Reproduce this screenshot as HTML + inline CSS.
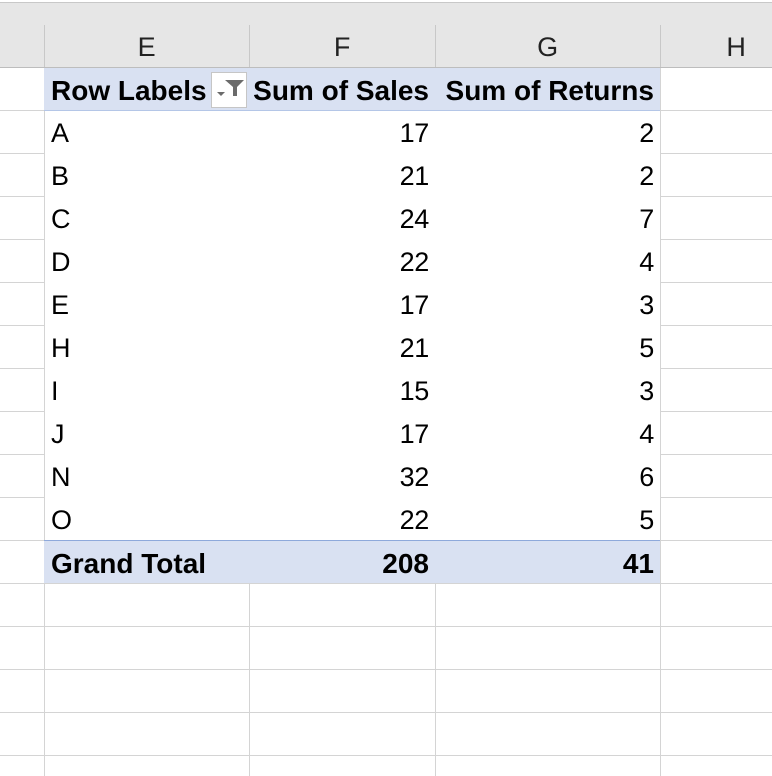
<!DOCTYPE html>
<html><head><style>
body{margin:0;width:772px;height:776px;overflow:hidden;background:#fff;font-family:"Liberation Sans",Arial,sans-serif;position:relative}
.a{position:absolute}
.hl{position:absolute;left:0;width:772px;height:1px;background:#d4d4d4}
.vl{position:absolute;top:68px;height:708px;width:1px;background:#d4d4d4}
.t{position:absolute;font-size:27px;line-height:43px;height:43px;color:#000;white-space:nowrap;letter-spacing:-0.3px}
.b{font-weight:bold;letter-spacing:0}
.r{text-align:right}
</style></head><body>
<div class="a" style="left:0;top:0;width:772px;height:2px;background:#fff"></div>
<div class="a" style="left:0;top:2px;width:772px;height:1px;background:#c8c8c8"></div>
<div class="a" style="left:0;top:3px;width:772px;height:64px;background:#e6e6e6"></div>
<div class="a" style="left:0;top:67px;width:772px;height:1px;background:#bdbdbd"></div>
<div class="a" style="left:44px;top:25px;width:1px;height:42px;background:#c8c8c8"></div>
<div class="a" style="left:249px;top:25px;width:1px;height:42px;background:#c8c8c8"></div>
<div class="a" style="left:435px;top:25px;width:1px;height:42px;background:#c8c8c8"></div>
<div class="a" style="left:660px;top:25px;width:1px;height:42px;background:#c8c8c8"></div>
<div class="t" style="left:44px;width:205px;top:26px;text-align:center;font-size:27px;color:#222">E</div>
<div class="t" style="left:249px;width:186px;top:26px;text-align:center;font-size:27px;color:#222">F</div>
<div class="t" style="left:435px;width:225px;top:26px;text-align:center;font-size:27px;color:#222">G</div>
<div class="t" style="left:660px;width:152px;top:26px;text-align:center;font-size:27px;color:#222">H</div>

<div class="hl" style="top:110px"></div><div class="hl" style="top:153px"></div><div class="hl" style="top:196px"></div><div class="hl" style="top:239px"></div><div class="hl" style="top:282px"></div><div class="hl" style="top:325px"></div><div class="hl" style="top:368px"></div><div class="hl" style="top:411px"></div><div class="hl" style="top:454px"></div><div class="hl" style="top:497px"></div><div class="hl" style="top:540px"></div><div class="hl" style="top:583px"></div><div class="hl" style="top:626px"></div><div class="hl" style="top:669px"></div><div class="hl" style="top:712px"></div><div class="hl" style="top:755px"></div>
<div class="vl" style="left:44px"></div><div class="vl" style="left:249px"></div><div class="vl" style="left:435px"></div><div class="vl" style="left:660px"></div>

<div class="a" style="left:45px;top:111px;width:615px;height:429px;background:#fff"></div>
<div class="a" style="left:44px;top:68px;width:616px;height:42px;background:#d9e1f2"></div>
<div class="a" style="left:44px;top:110px;width:616px;height:1px;background:#b4c6e7"></div>
<div class="a" style="left:44px;top:540px;width:616px;height:43px;background:#d9e1f2"></div>
<div class="a" style="left:44px;top:540px;width:616px;height:1px;background:#8ea9db"></div>
<div class="a" style="left:211px;top:72px;width:36px;height:36px;background:#fff;border:1px solid #c6c6c6;box-sizing:border-box"></div>
<svg class="a" style="left:211px;top:72px" width="37" height="37"><path d="M14 8 H33 L26 15 V24 H22 V15 Z" fill="#6b6b6b"/><path d="M6 20 H14 L10 24 Z" fill="#6b6b6b"/></svg>

<div class="t b" style="left:51px;top:69px;font-size:28px">Row Labels</div>
<div class="t r b" style="left:249px;width:180px;top:69px;font-size:28px">Sum of Sales</div>
<div class="t r b" style="left:435px;width:219px;top:69px;font-size:28px">Sum of Returns</div>

<div class="t" style="left:51px;top:112px">A</div><div class="t r" style="left:249px;width:180px;top:112px">17</div><div class="t r" style="left:435px;width:219px;top:112px">2</div>
<div class="t" style="left:51px;top:155px">B</div><div class="t r" style="left:249px;width:180px;top:155px">21</div><div class="t r" style="left:435px;width:219px;top:155px">2</div>
<div class="t" style="left:51px;top:198px">C</div><div class="t r" style="left:249px;width:180px;top:198px">24</div><div class="t r" style="left:435px;width:219px;top:198px">7</div>
<div class="t" style="left:51px;top:241px">D</div><div class="t r" style="left:249px;width:180px;top:241px">22</div><div class="t r" style="left:435px;width:219px;top:241px">4</div>
<div class="t" style="left:51px;top:284px">E</div><div class="t r" style="left:249px;width:180px;top:284px">17</div><div class="t r" style="left:435px;width:219px;top:284px">3</div>
<div class="t" style="left:51px;top:327px">H</div><div class="t r" style="left:249px;width:180px;top:327px">21</div><div class="t r" style="left:435px;width:219px;top:327px">5</div>
<div class="t" style="left:51px;top:370px">I</div><div class="t r" style="left:249px;width:180px;top:370px">15</div><div class="t r" style="left:435px;width:219px;top:370px">3</div>
<div class="t" style="left:51px;top:413px">J</div><div class="t r" style="left:249px;width:180px;top:413px">17</div><div class="t r" style="left:435px;width:219px;top:413px">4</div>
<div class="t" style="left:51px;top:456px">N</div><div class="t r" style="left:249px;width:180px;top:456px">32</div><div class="t r" style="left:435px;width:219px;top:456px">6</div>
<div class="t" style="left:51px;top:499px">O</div><div class="t r" style="left:249px;width:180px;top:499px">22</div><div class="t r" style="left:435px;width:219px;top:499px">5</div>
<div class="t b" style="left:51px;top:542px;font-size:28px">Grand Total</div><div class="t r b" style="left:249px;width:180px;top:542px;font-size:28px">208</div><div class="t r b" style="left:435px;width:219px;top:542px;font-size:28px">41</div>
</body></html>
